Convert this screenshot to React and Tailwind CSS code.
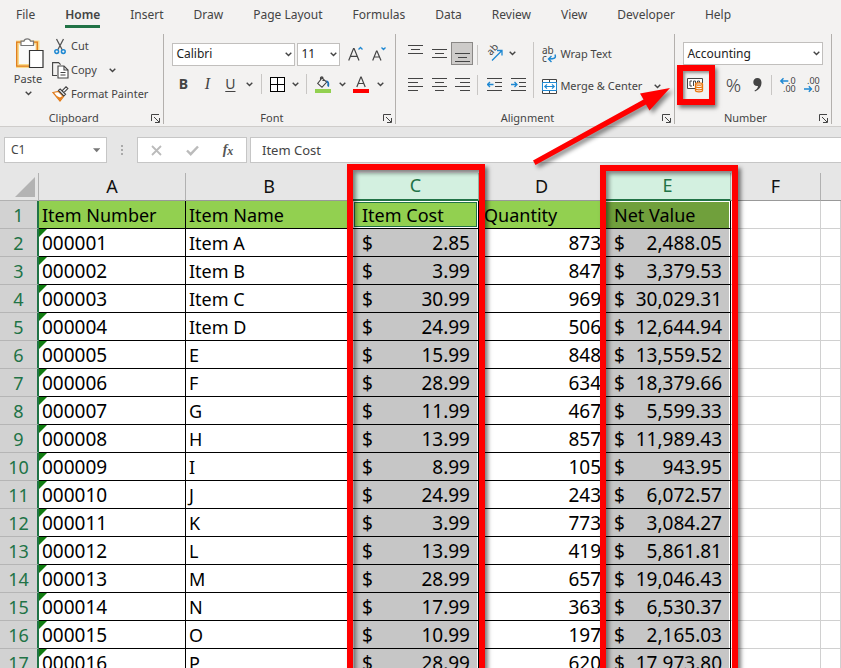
import { useState } from 'react';
import clsx from 'clsx';

const tabs = ['File', 'Home', 'Insert', 'Draw', 'Page Layout', 'Formulas', 'Data', 'Review', 'View', 'Developer', 'Help'];

const rows = [
  ['000001', 'Item A', '2.85', '873', '2,488.05'],
  ['000002', 'Item B', '3.99', '847', '3,379.53'],
  ['000003', 'Item C', '30.99', '969', '30,029.31'],
  ['000004', 'Item D', '24.99', '506', '12,644.94'],
  ['000005', 'E', '15.99', '848', '13,559.52'],
  ['000006', 'F', '28.99', '634', '18,379.66'],
  ['000007', 'G', '11.99', '467', '5,599.33'],
  ['000008', 'H', '13.99', '857', '11,989.43'],
  ['000009', 'I', '8.99', '105', '943.95'],
  ['000010', 'J', '24.99', '243', '6,072.57'],
  ['000011', 'K', '3.99', '773', '3,084.27'],
  ['000012', 'L', '13.99', '419', '5,861.81'],
  ['000013', 'M', '28.99', '657', '19,046.43'],
  ['000014', 'N', '17.99', '363', '6,530.37'],
  ['000015', 'O', '10.99', '197', '2,165.03'],
  ['000016', 'P', '28.99', '620', '17,973.80'],
];

const Chevron = () => (
  <svg width="7" height="5" viewBox="0 0 7 5" fill="none" stroke="#444" strokeWidth="1.4" className="shrink-0">
    <path d="M0.7 0.8 3.5 3.6 6.3 0.8" />
  </svg>
);

const Launcher = () => (
  <button aria-label="More options" className="shrink-0">
    <svg width="9" height="9" viewBox="0 0 9 9" fill="none" stroke="#444" strokeWidth="1">
      <path d="M0.5 7V0.5H8M3 3l5 5M8.5 4v4.5H4" />
    </svg>
  </button>
);

const Divider = ({ className }) => <div className={clsx('w-px shrink-0 bg-[#c8c6c4]', className)} />;

const IconButton = ({ label, className, children }) => (
  <button aria-label={label} className={clsx('flex h-6 shrink-0 items-center justify-center', className)}>
    {children}
  </button>
);

const Group = ({ label, className, children }) => (
  <section className={clsx('flex h-[90px] shrink-0 flex-col border-r border-[#b3b0ad]', className)}>
    {children}
    <div className="mt-auto flex h-3 items-center pr-[3px] text-[11px] leading-3">
      <span className="mr-1 flex-1 text-center">{label}</span>
      <Launcher />
    </div>
  </section>
);

const Select = ({ label, options, className }) => (
  <div className={clsx('relative h-[23px]', className)}>
    <select
      aria-label={label}
      className="block h-full w-full appearance-none border border-[#c1bfbd] bg-white pl-[3px] text-xs leading-5 text-[#222] outline-none"
    >
      {options.map((option) => (
        <option key={option}>{option}</option>
      ))}
    </select>
    <div className="pointer-events-none absolute inset-y-0 right-[3px] flex items-center">
      <Chevron />
    </div>
  </div>
);

// each line is [x, width], drawn top to bottom
const Lines = ({ lines }) => {
  const height = lines.length * 4 - 1;
  return (
    <svg width="15" height={height} viewBox={`0 0 15 ${height}`} shapeRendering="crispEdges" fill="#444">
      {lines.map(([x, width], i) => (
        <rect key={i} x={x} y={1 + i * 4} width={width} height="1" />
      ))}
    </svg>
  );
};

const PasteIcon = () => (
  <svg width="28" height="31" viewBox="0 0 28 31" fill="none">
    <path d="M1 4.5h20.500V28H1z" fill="#fafafa" stroke="#f9d98a" strokeWidth="4" />
    <path d="M0.700 4.200h20.600v24H0.700z" stroke="#e07b1a" strokeWidth="1.300" />
    <path d="M5 7.500V3.200h3C8.500.2 14 .2 14.500 3.200h3v4.300z" fill="#fff" stroke="#777" strokeWidth="1.200" />
    <path d="M13.500 12.500h13.500v17H13.500z" fill="#fff" stroke="#333" strokeWidth="1.200" />
  </svg>
);

const CutIcon = () => (
  <svg width="12" height="17" viewBox="0 0 12 17" fill="none">
    <path d="M2.500 1 8.300 12M9.500 1 3.700 12" stroke="#555" strokeWidth="1.300" />
    <circle cx="2.700" cy="13.600" r="1.900" stroke="#1e88d2" strokeWidth="1.500" />
    <circle cx="9.300" cy="13.600" r="1.900" stroke="#1e88d2" strokeWidth="1.500" />
  </svg>
);

const CopyIcon = () => (
  <svg width="17" height="17" viewBox="0 0 17 17" fill="none" stroke="#444" strokeWidth="1.100">
    <path d="M5 13.500H.6V.6h6l2 2" />
    <path d="M6 4h6l4 4v8H6z" fill="#fff" />
    <path d="M12 4v4h4M8.500 10.500h5M8.500 13h5" />
  </svg>
);

const BrushIcon = () => (
  <svg width="17" height="16" viewBox="0 0 17 16" fill="none">
    <path d="M1 6.500 6.500 5.500l5 5L8 15z" fill="#fff" stroke="#e07b1a" strokeWidth="1.200" />
    <path d="M3.500 9.500 8 11.500l2.500-1.500.5 1L8 14.500z" fill="#e8811c" />
    <path d="M6.500 4.500 8.200 3l5.300 5.300-1.700 1.700zM10 4.800 14 .8l1.800 1.800-4 4" fill="#fff" stroke="#444" strokeWidth="1.200" />
  </svg>
);

const FontSizeIcon = ({ big }) => (
  <svg width="16" height="16" viewBox="0 0 16 16" fill="none">
    {big ? (
      <path d="M.7 14.500 5.500 2.500h.6L11 14.500M2.500 10.300h6.600" stroke="#444" strokeWidth="1.200" />
    ) : (
      <path d="M.7 14.500 4.500 5h.5L9 14.500M2.200 11h5.200" stroke="#444" strokeWidth="1.200" />
    )}
    <path d={big ? 'M10.500 3.500 12.500 1.500 14.500 3.500' : 'M9.500 1.500 11.500 3.500 13.500 1.500'} stroke="#1e88d2" strokeWidth="1.300" />
  </svg>
);

const BordersIcon = () => (
  <svg width="15" height="15" viewBox="0 0 15 15" fill="#fff" stroke="#000" shapeRendering="crispEdges">
    <path d="M.5.5h14v14H.5zM7.500.5v14M.5 7.500h14" />
  </svg>
);

const FillIcon = () => (
  <svg width="16" height="17" viewBox="0 0 16 17" fill="none">
    <path d="M7 2 2.700 7.500 7 11.300 11.700 6zM5.500 4V2C5.500.5 8 .5 8 2v3" stroke="#444" strokeWidth="1.100" />
    <path d="M11 4.500c3 0 3.800 2.500 3 6.500-2-.5-2-2-1.500-3.500z" fill="#1b6fb8" />
    <path d="M0 13h16v4H0z" fill="#92d050" />
  </svg>
);

const FontColorIcon = () => (
  <svg width="16" height="17" viewBox="0 0 16 17" fill="none">
    <path d="M3.800 11 7.800 1h.4l4 10M5.300 7.500h5.400" stroke="#444" strokeWidth="1.200" />
    <path d="M0 13h16v4H0z" fill="#f00" />
  </svg>
);

const OrientationIcon = () => (
  <svg width="17" height="17" viewBox="0 0 17 17" fill="none" className="overflow-visible">
    <text x="0" y="0" transform="translate(5 11) rotate(-48)" fontSize="10" fill="#444">ab</text>
    <path d="M6 15.500 15.500 6M11 5.500h5V10.500" stroke="#1e88d2" strokeWidth="1.300" />
  </svg>
);

const WrapIcon = () => (
  <svg width="15" height="17" viewBox="0 0 15 17" fill="none" className="overflow-visible">
    <text x="0" y="8" fontSize="10" fill="#444">ab</text>
    <text x="0" y="16" fontSize="10" fill="#444">c</text>
    <path d="M13 8.500c1.500 3.500-1 4.500-6 4.500M9.500 10 6.500 13l3 3" stroke="#1e88d2" strokeWidth="1.400" />
  </svg>
);

const MergeIcon = () => (
  <svg width="15" height="15" viewBox="0 0 15 15" fill="none">
    <path d="M.5.5h14v14H.5zM7.500.5v3M7.500 11.500v3" fill="#fff" stroke="#444" />
    <path d="M.5 3.500h14v8H.5z" fill="#fff" stroke="#1e88d2" />
    <path d="M3 7.500h9M5 5.300 2.800 7.500 5 9.700M10 5.300l2.200 2.200L10 9.700" stroke="#1e88d2" strokeWidth="1.200" />
  </svg>
);

const IndentIcon = ({ right }) => (
  <svg width="15" height="15" viewBox="0 0 15 15" fill="none">
    <path d="M0 1.500h15M8 5.500h7M8 9.500h7M0 13.500h15" stroke="#444" shapeRendering="crispEdges" />
    <path d={right ? 'M0 7.500h6M3.500 5 6 7.500 3.500 10' : 'M.5 7.500h6M3 5 .5 7.500 3 10'} stroke="#1e88d2" strokeWidth="1.300" />
  </svg>
);

const AccountingIcon = () => (
  <svg width="17" height="15" viewBox="0 0 17 15" fill="none">
    <path d="M8 10.500H.5V.5h15V5" fill="#fff" stroke="#444" />
    <path d="M5 3H3v5h2M6.500 8V3h2v2M10.500 5V3h2v2" stroke="#444" />
    <path d="M8.500 6v6.500c0 1.700 7 1.700 7 0V6" fill="#fff" stroke="#e8740c" strokeWidth="1.300" />
    <path d="M8.500 8.300c0 1.700 7 1.700 7 0M8.500 10.500c0 1.700 7 1.700 7 0" stroke="#e8740c" strokeWidth="1.200" />
    <ellipse cx="12" cy="6" rx="3.500" ry="1.200" fill="#fff" stroke="#e8740c" strokeWidth="1.200" />
  </svg>
);

const DecimalIcon = ({ decrease }) => (
  <svg width="17" height="17" viewBox="0 0 17 17" fill="none" className="overflow-visible">
    <text x={decrease ? 3 : 8} y="7" fontSize="9" fill="#444">{decrease ? '.00' : '.0'}</text>
    <text x={decrease ? 8 : 3} y="15" fontSize="9" fill="#444">{decrease ? '.0' : '.00'}</text>
    <path
      d={decrease ? 'M0 12h7.500M4.800 9.300 7.500 12 4.800 14.700' : 'M.8 4h7.500M3.500 1.300.8 4l2.700 2.700'}
      stroke="#1e88d2"
      strokeWidth="1.400"
    />
  </svg>
);

const Ribbon = () => (
  <div className="flex border-b border-[#cfcdcb] bg-[#f3f2f1] pb-0.5 text-[11px] text-[#444]">
    <Group label="Clipboard">
      <div className="flex pr-[15px] pl-3">
        <button className="flex w-8 flex-col items-center pt-1">
          <span className="pl-1"><PasteIcon /></span>
          <span className="mt-0.5 mb-1 leading-4">Paste</span>
          <Chevron />
        </button>
        <div className="ml-2 flex flex-col">
          <button className="flex h-6 items-center">
            <span className="flex w-[19px] justify-center pr-[3px]"><CutIcon /></span>Cut
          </button>
          <div className="flex h-6 items-center gap-3">
            <button className="flex items-center">
              <span className="w-[19px]"><CopyIcon /></span>Copy
            </button>
            <button aria-label="Copy options"><Chevron /></button>
          </div>
          <button className="flex h-6 items-center whitespace-nowrap">
            <span className="w-[19px]"><BrushIcon /></span>Format Painter
          </button>
        </div>
      </div>
    </Group>

    <Group label="Font">
      <div className="flex items-center pt-2 pl-2">
        <Select label="Font" options={['Calibri', 'Arial']} className="w-[123px]" />
        <Select label="Font size" options={['11', '12', '14']} className="ml-0.5 w-[43px]" />
        <IconButton label="Increase font size" className="ml-1 w-6"><FontSizeIcon big /></IconButton>
        <IconButton label="Decrease font size" className="w-6"><FontSizeIcon /></IconButton>
      </div>
      <div className="flex h-7 items-center pt-2 pr-2 pl-[7px]">
        <IconButton label="Bold" className="w-6 text-sm font-bold">B</IconButton>
        <IconButton label="Italic" className="w-6 font-['Liberation_Serif',serif] text-base italic">I</IconButton>
        <IconButton label="Underline" className="w-[22px] text-sm underline underline-offset-2">U</IconButton>
        <IconButton label="Underline options" className="w-4"><Chevron /></IconButton>
        <Divider className="mx-1 h-5" />
        <IconButton label="Borders" className="w-[22px]"><BordersIcon /></IconButton>
        <IconButton label="Border options" className="w-[14px]"><Chevron /></IconButton>
        <Divider className="mx-1 h-5" />
        <IconButton label="Fill color" className="w-6"><FillIcon /></IconButton>
        <IconButton label="Fill options" className="w-[14px]"><Chevron /></IconButton>
        <IconButton label="Font color" className="w-6"><FontColorIcon /></IconButton>
        <IconButton label="Font color options" className="w-[14px]"><Chevron /></IconButton>
      </div>
    </Group>

    <Group label="Alignment">
      <div className="flex pr-[13px] pl-[7px]">
        <div>
          <div className="flex h-[31px] items-end">
            <IconButton label="Top align" className="w-6 pb-2"><Lines lines={[[0, 15], [3, 9], [0, 15]]} /></IconButton>
            <IconButton label="Middle align" className="w-6"><Lines lines={[[0, 15], [3, 9], [0, 15]]} /></IconButton>
            <button aria-label="Bottom align" className="flex h-[23px] w-[22px] items-end justify-center border border-[#8a8886] bg-[#cdcbc9] pb-px">
              <Lines lines={[[0, 15], [3, 9], [0, 15]]} />
            </button>
            <Divider className="mx-1 h-5" />
            <IconButton label="Orientation" className="w-6"><OrientationIcon /></IconButton>
            <IconButton label="Orientation options" className="w-3"><Chevron /></IconButton>
          </div>
          <div className="flex h-[31px] items-center pt-2">
            <IconButton label="Align left" className="w-6"><Lines lines={[[0, 15], [0, 10], [0, 15], [0, 10]]} /></IconButton>
            <IconButton label="Center" className="w-6"><Lines lines={[[0, 15], [3, 9], [0, 15], [3, 9]]} /></IconButton>
            <IconButton label="Align right" className="w-[22px]"><Lines lines={[[0, 15], [5, 10], [0, 15], [5, 10]]} /></IconButton>
            <Divider className="mx-1 h-5" />
            <IconButton label="Decrease indent" className="w-6"><IndentIcon /></IconButton>
            <IconButton label="Increase indent" className="w-6"><IndentIcon right /></IconButton>
          </div>
        </div>
        <Divider className="mt-2 ml-[3px] h-14" />
        <div className="ml-2">
          <button className="flex h-10 items-center gap-[3px]"><WrapIcon />Wrap Text</button>
          <div className="flex h-6 items-center gap-3">
            <button className="flex items-center gap-[3px] whitespace-nowrap"><MergeIcon />Merge &amp; Center</button>
            <button aria-label="Merge options"><Chevron /></button>
          </div>
        </div>
      </div>
    </Group>

    <Group label="Number">
      <div className="pt-2 pr-[7px] pl-2">
        <Select label="Number format" options={['Accounting', 'General']} className="w-[140px]" />
        <div className="flex h-10 items-center">
          {/* callout around the accounting format button */}
          <div className="relative flex">
            <IconButton label="Accounting number format" className="w-6"><AccountingIcon /></IconButton>
            <div className="pointer-events-none absolute -top-2 -left-1.5 h-10 w-[38px] border-6 border-[#f00] shadow-[2px_3px_4px_rgba(0,0,0,0.5),inset_2px_2px_3px_rgba(0,0,0,0.4)]" />
          </div>
          <IconButton label="Percent style" className="ml-3 w-7 text-[19px] font-light">%</IconButton>
          <IconButton label="Comma style" className="w-5">
            <svg width="9" height="14" viewBox="0 0 9 14" fill="#444">
              <path d="M4.300 0C7 0 8.500 2 8.500 4.500c0 4-2.500 7.500-6.500 9l-.5-1c2-1 3.300-2.500 3.500-4.500C2.500 8.500.3 7 .3 4.300.3 1.800 2 0 4.300 0z" />
            </svg>
          </IconButton>
          <Divider className="mx-1 h-5" />
          <IconButton label="Increase decimal" className="w-6"><DecimalIcon /></IconButton>
          <IconButton label="Decrease decimal" className="w-6"><DecimalIcon decrease /></IconButton>
        </div>
      </div>
    </Group>
  </div>
);

const FormulaBar = () => (
  <div className="flex bg-[#e6e6e6] py-[10px] pl-1 text-[#444]">
    <div className="flex h-[26px] w-[103px] items-center border border-[#c6c6c6] bg-white pr-1.5">
      <input aria-label="Name box" defaultValue="C1" className="w-full min-w-0 pl-1.5 text-xs outline-none" />
      <svg width="8" height="5" viewBox="0 0 8 5" fill="#777"><path d="M0 0h8L4 4.500z" /></svg>
    </div>
    <svg width="30" height="26" viewBox="0 0 30 26" fill="#aaa">
      <path d="M14 8h2v2h-2zM14 12h2v2h-2zM14 16h2v2h-2z" />
    </svg>
    <div className="flex h-[26px] w-[110px] items-center border border-[#c6c6c6] bg-white">
      <IconButton label="Cancel" className="w-9">
        <svg width="11" height="11" viewBox="0 0 11 11" stroke="#bbb" strokeWidth="1.800"><path d="M1 1l9 9M10 1l-9 9" /></svg>
      </IconButton>
      <IconButton label="Enter" className="w-9">
        <svg width="13" height="11" viewBox="0 0 13 11" fill="none" stroke="#bbb" strokeWidth="2.400"><path d="M1 5.500l3.700 3.700L12 1.500" /></svg>
      </IconButton>
      <IconButton label="Insert function" className="w-9 font-['Liberation_Serif',serif] text-sm font-bold text-[#555] italic">
        f<span className="pt-0.5 text-xs">x</span>
      </IconButton>
    </div>
    <input
      aria-label="Formula"
      defaultValue="Item Cost"
      className="ml-[3px] h-[26px] min-w-0 flex-1 border border-r-0 border-[#c6c6c6] bg-white pl-[11px] text-[13px] outline-none"
    />
  </div>
);

const ColumnHeader = ({ name, selected }) => (
  <th
    scope="col"
    className={clsx(
      'h-7 border-r p-0 pb-0.5 font-normal leading-6',
      selected ? 'border-r-[#9bb8a8] border-b-2 border-b-[#217346] bg-[#d3f0e0] text-[#217346]' : 'border-r-[#b1b1b1] border-b border-b-[#999] text-[#111]'
    )}
  >
    {name}
  </th>
);

const RowHeader = ({ number }) => (
  <th scope="row" className="h-7 border-r-2 border-b border-r-[#217346] border-b-[#b5b5b5] bg-[#d2d2d2] p-0 text-lg font-normal leading-6 text-[#217346]">
    {number}
  </th>
);

const Money = ({ value }) => (
  <td className="border-r border-b border-black p-0">
    <div className="flex h-[27px] items-center justify-between border-r border-l border-white bg-[#c6c6c6] pt-0.5 pr-[7px] pl-2">
      <span>$</span>
      <span>{value}</span>
    </div>
  </td>
);

const headCell = 'h-7 border-b border-black bg-[#92d050] p-0 pl-[3px] text-left leading-6';
const cell = 'h-7 border-b border-black p-0 leading-6';
const emptyCell = 'border-r border-b border-[#d0d0d0] p-0';

const Sheet = () => (
  <div className="min-h-0 flex-1 overflow-hidden bg-white">
    <table className="w-full table-fixed border-separate border-spacing-0 text-lg text-black">
      <colgroup>
        <col className="w-[39px]" />
        <col className="w-[147px]" />
        <col className="w-[167px]" />
        <col className="w-[126px]" />
        <col className="w-[126px]" />
        <col className="w-[126px]" />
        <col className="w-[90px]" />
        <col />
      </colgroup>
      <thead className="bg-[#e6e6e6]">
        <tr>
          <td className="border-r border-b border-[#b1b1b1] p-0">
            <svg width="20" height="20" viewBox="0 0 20 20" className="ml-[15px]" fill="#b3b3b3"><path d="M20 0v20H0z" /></svg>
          </td>
          <ColumnHeader name="A" />
          <ColumnHeader name="B" />
          <ColumnHeader name="C" selected />
          <ColumnHeader name="D" />
          <ColumnHeader name="E" selected />
          <ColumnHeader name="F" />
          <td className="border-b border-[#999] p-0" />
        </tr>
      </thead>
      <tbody>
        <tr>
          <RowHeader number={1} />
          <td className={clsx(headCell, 'border-r')}>Item Number</td>
          <td className={clsx(headCell, 'border-r')}>Item Name</td>
          <td className="border-r border-b border-black p-0">
            <div className="h-[27px] border border-white bg-[#92d050]">
              <div className="flex h-full items-center border border-[#217346] pl-[7px]">Item Cost</div>
            </div>
          </td>
          <td className={clsx(headCell, 'border-r')}><span className="pl-0.5">Quantity</span></td>
          <td className="border-r border-b border-black p-0">
            <div className="flex h-[27px] items-center border-x border-t border-white bg-[#70a03c] pl-2">Net Value</div>
          </td>
          <td className={emptyCell} />
          <td className={emptyCell} />
        </tr>
        {rows.map(([number, name, cost, quantity, net], i) => (
          <tr key={number} className="text-[19px]">
            <RowHeader number={i + 2} />
            <td className={clsx(cell, 'border-r')}>
              <div className="relative pl-[3px]">
                <svg width="8" height="8" viewBox="0 0 8 8" className="absolute -top-0.5 left-0" fill="#107c10"><path d="M0 0h8L0 8z" /></svg>
                <span className="relative">{number}</span>
              </div>
            </td>
            <td className={clsx(cell, 'border-r pl-[3px] text-lg')}>{name}</td>
            <Money value={cost} />
            <td className={clsx(cell, 'border-r pr-[3px] text-right')}>{quantity}</td>
            <Money value={net} />
            <td className={emptyCell} />
            <td className={emptyCell} />
          </tr>
        ))}
      </tbody>
    </table>
  </div>
);

const ColumnCallout = ({ className }) => (
  <div
    className={clsx(
      'pointer-events-none absolute -bottom-3 w-[138px] border-6 border-[#f00] shadow-[3px_3px_4px_rgba(0,0,0,0.5),inset_3px_3px_4px_rgba(0,0,0,0.45)]',
      className
    )}
  />
);

export default function App() {
  const [activeTab, setActiveTab] = useState('Home');

  return (
    <div className="relative flex h-screen flex-col overflow-hidden bg-[#e6e6e6] font-['Noto_Sans',sans-serif]">
      <nav className="flex h-[34px] shrink-0 items-start gap-[30px] bg-[#f3f2f1] pl-4 text-xs text-[#444]">
        {tabs.map((tab) => (
          <button
            key={tab}
            onClick={() => setActiveTab(tab)}
            className={clsx(
              'h-7 shrink-0 border-b-3 pt-1 leading-5',
              tab === activeTab ? 'border-[#217346] font-semibold' : 'border-transparent'
            )}
          >
            {tab}
          </button>
        ))}
      </nav>
      <Ribbon />
      <FormulaBar />
      <Sheet />

      <ColumnCallout className="top-[164px] left-[347px]" />
      <ColumnCallout className="top-[165px] left-[600px]" />
      <svg
        width="150"
        height="90"
        viewBox="0 0 150 90"
        className="pointer-events-none absolute top-20 left-[528px] drop-shadow-[3px_3px_2px_rgba(0,0,0,0.45)]"
        fill="#f00"
      >
        <path d="M5 80.500 115.500 19.500 112 13.500 142 8 121.500 30.500 118 24.500 7.500 85z" />
      </svg>
    </div>
  );
}
